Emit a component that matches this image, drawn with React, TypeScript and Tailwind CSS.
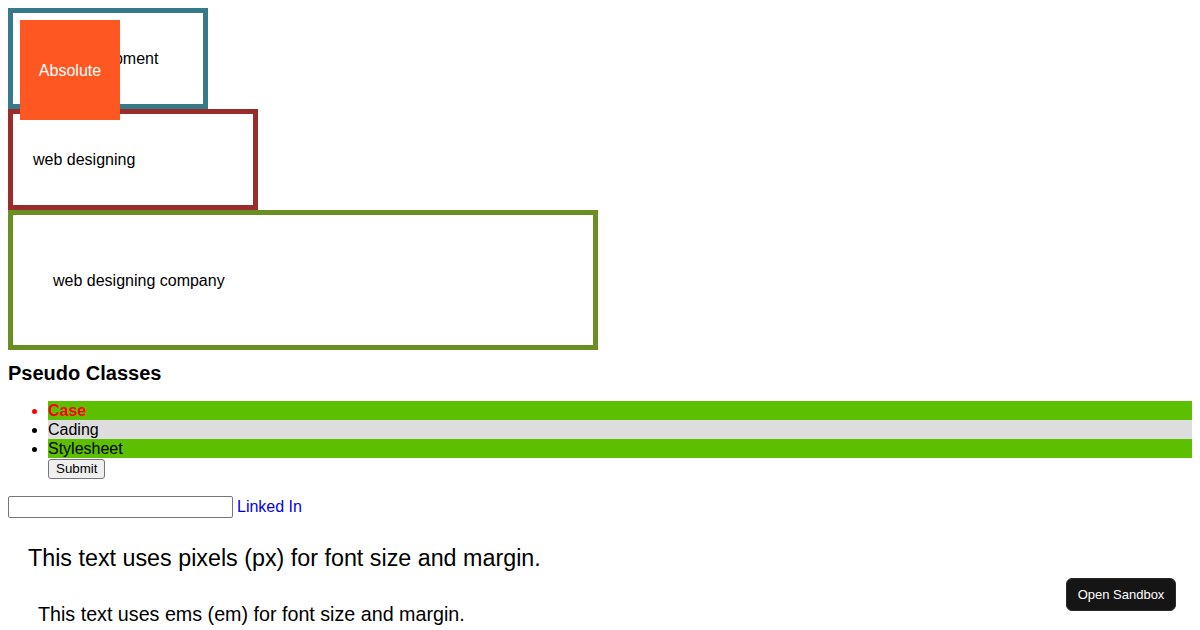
const App = () => {
  return (
    <div className="relative min-h-[630px] bg-white p-2 text-black font-['Liberation_Sans',Arial,sans-serif] text-base">
      {/* bordered boxes */}
      <div className="flex h-[101px] w-[200px] items-center border-[5px] border-[#357a88] pl-5">
        web development
      </div>
      <div className="flex h-[101px] w-[250px] items-center border-[5px] border-[#9b2c2c] pl-5">
        web designing
      </div>
      <div className="flex h-[140px] w-[590px] items-center border-[5px] border-[#6b8e23] pl-10 pt-px">
        web designing company
      </div>

      {/* overlay box */}
      <div className="absolute left-5 top-5 flex h-[100px] w-[100px] items-center justify-center bg-[#ff5722] pt-px text-white">
        Absolute
      </div>

      <h3 className="mt-3 text-[20px] font-bold leading-[23px]">Pseudo Classes</h3>

      <ul className="mt-4 mb-4 list-disc pl-10 leading-[19px]">
        <li className="bg-[#5cc000] font-bold text-[#ff0000]">Case</li>
        <li className="bg-[#dddddd]">Cading</li>
        <li className="bg-[#5cc000]">Stylesheet</li>
        <div>
          <button className="h-5 rounded-[3px] border border-[#767676] bg-[#efefef] px-[7px] text-[13.33px] leading-none">
            Submit
          </button>
        </div>
      </ul>

      <div className="flex items-center gap-1">
        <input type="text" className="h-[22px] w-[225px] rounded-[2px] border border-[#767676] bg-white" />
        <a href="#" className="text-[#0000ee]">Linked In</a>
      </div>

      <p className="mt-[26px] ml-5 text-[23.3px] leading-[27px]">
        This text uses pixels (px) for font size and margin.
      </p>
      <p className="mt-[31px] ml-[30px] text-[19.7px] leading-[23px]">
        This text uses ems (em) for font size and margin.
      </p>

      <button className="fixed right-6 bottom-[19px] h-[33px] w-[110px] rounded-md border border-[#2a2a2a] bg-[#151515] text-[13px] text-white">
        Open Sandbox
      </button>
    </div>
  );
};

export default App;
